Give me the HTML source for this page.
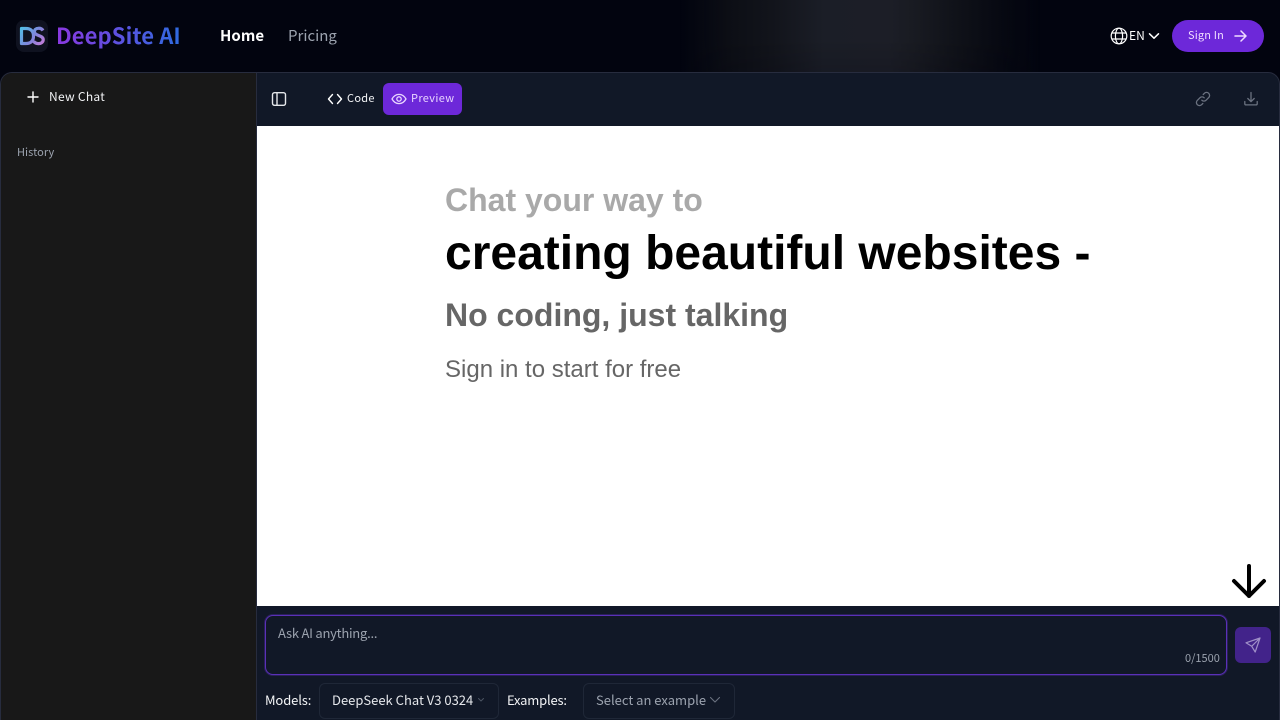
<!DOCTYPE html>
<html><head><meta charset="utf-8"><style>
*{box-sizing:border-box;margin:0;padding:0}
html,body{width:1280px;height:720px;overflow:hidden;background:#02040f;font-family:"Noto Sans CJK SC","Liberation Sans",sans-serif;color:#fff}
.a{position:absolute;white-space:nowrap}
#glow{left:640px;top:0;width:400px;height:72px;background:linear-gradient(90deg,rgba(2,4,15,0) 0%,rgba(2,4,15,0) 10%,#0c0e15 22%,#12141b 33%,#1b1e27 46%,#1c1e27 62%,#191b22 68%,#0f1118 80%,#070912 90%,rgba(2,4,15,0) 100%);-webkit-mask-image:linear-gradient(180deg,#000 0%,#000 55%,rgba(0,0,0,.85) 100%);mask-image:linear-gradient(180deg,#000 0%,#000 55%,rgba(0,0,0,.85) 100%)}
#frame{left:0;top:72px;width:1280px;height:648px;border:1px solid #272c3e;border-bottom:0;border-radius:12px 12px 0 0;overflow:hidden;background:#111827}
svg{position:absolute;fill:none;stroke-linecap:round;stroke-linejoin:round}
h1,h2,h3,p{position:absolute;font-family:"Liberation Sans",Arial,sans-serif;white-space:nowrap}
</style></head><body>
<div class="a" id="glow"></div>

<div class="a" style="left:16px;top:20px;width:32px;height:32px;border-radius:8px;background:#0f1220"></div>
<svg style="left:16px;top:20px" width="32" height="32" viewBox="0 0 32 32"><defs><linearGradient id="lg" gradientUnits="userSpaceOnUse" x1="4" y1="7" x2="27" y2="26"><stop offset="0" stop-color="#4fc3e8"/><stop offset=".55" stop-color="#7f86dc"/><stop offset="1" stop-color="#c87ad8"/></linearGradient></defs>
<path d="M5.500 8.500h4.500c5 0 7.500 2.800 7.500 7.500s-2.500 7.500-7.500 7.500H5.500z" stroke="url(#lg)" stroke-width="3.200" stroke-linecap="butt"/>
<path d="M27 10.500c-1-1.600-2.800-2.300-4.600-2.200-2.500.1-4 1.500-4 3.400 0 4.500 8.800 3 8.800 7.900 0 2.400-2 4-4.800 4-2 0-3.800-.9-4.800-2.400" stroke="url(#lg)" stroke-width="3.200" stroke-linecap="butt"/></svg>
<div class="a" style="left:56px;top:19px;font-size:22px;line-height:32px;font-weight:700;background:linear-gradient(90deg,#8a38e0,#2f6be0);-webkit-background-clip:text;background-clip:text;color:transparent;letter-spacing:.08px">DeepSite AI</div>
<div class="a" style="left:220px;top:25px;font-size:15px;line-height:22px;font-weight:700;letter-spacing:.05px">Home</div>
<div class="a" style="left:288px;top:25px;font-size:15px;line-height:22px;color:#9ca3af;letter-spacing:0">Pricing</div>

<svg style="left:1110px;top:27px" width="18" height="18" viewBox="0 0 18 18" stroke="#fff" stroke-width="1.200"><circle cx="9" cy="9" r="7.800"/><ellipse cx="9" cy="9" rx="3.600" ry="7.800"/><path d="M2 6h14M2 12h14"/></svg>
<div class="a" style="left:1129px;top:27px;font-size:12px;line-height:18px">EN</div>
<svg style="left:1147px;top:31px" width="14" height="10" viewBox="0 0 14 10" stroke="#fff" stroke-width="1.500"><path d="M2.500 2.800L7 7.200l4.500-4.400"/></svg>
<div class="a" style="left:1172px;top:20px;width:92px;height:32px;border-radius:16px;background:#6d28d9"></div>
<div class="a" style="left:1188px;top:26px;font-size:11px;line-height:18px;color:#f0dcff;letter-spacing:.15px">Sign In</div>
<svg style="left:1233px;top:29px" width="14" height="14" viewBox="0 0 14 14" stroke="#f0dcff" stroke-width="1.500"><path d="M2 7h10.500M8 2l5 5-5 5"/></svg>

<div class="a" id="frame">
 <div class="a" style="left:0;top:0;width:256px;height:648px;background:#181818;border-right:1px solid #272c3e"></div>
 <svg style="left:25px;top:17px" width="14" height="14" viewBox="0 0 14 14" stroke="#fff" stroke-width="1.400"><path d="M7 2v10M2 7h10"/></svg>
 <div class="a" style="left:48px;top:15px;font-size:12px;line-height:18px;letter-spacing:.3px;color:#f3f4f6">New Chat</div>
 <div class="a" style="left:16px;top:70px;font-size:11px;line-height:18px;color:#9ca3af;letter-spacing:.05px">History</div>

 <svg style="left:270px;top:18px" width="16" height="16" viewBox="0 0 16 16" stroke="#e5e7eb" stroke-width="1.400"><rect x="1.500" y="1.700" width="13" height="12.600" rx="2"/><path d="M6 2v12"/></svg>
 <svg style="left:326px;top:20px" width="16" height="12" viewBox="0 0 16 12" stroke="#fff" stroke-width="1.400"><path d="M5.500 1.500L1.500 6l4 4.500M10.500 1.500l4 4.500-4 4.500"/></svg>
 <div class="a" style="left:346px;top:16px;font-size:11px;line-height:18px;letter-spacing:.3px;color:#f3f4f6">Code</div>
 <div class="a" style="left:382px;top:10px;width:79px;height:32px;border-radius:6px;background:#6d28d9"></div>
 <svg style="left:390px;top:19px" width="16" height="14" viewBox="0 0 16 14" stroke="#e9d5ff" stroke-width="1.300"><path d="M1 7c1.700-3 4-4.600 7-4.600S13.300 4 15 7c-1.700 3-4 4.600-7 4.600S2.700 10 1 7z"/><circle cx="8" cy="7" r="2.200"/></svg>
 <div class="a" style="left:410px;top:16px;font-size:11px;line-height:18px;letter-spacing:.35px;color:#e9d5ff">Preview</div>
 <svg style="left:1194px;top:18px" width="16" height="16" viewBox="0 0 16 16" stroke="#6b7280" stroke-width="1.300"><path d="M6.800 9.200a3 3 0 004.300 0l2.600-2.600a3 3 0 00-4.300-4.300L8.200 3.500"/><path d="M9.200 6.800a3 3 0 00-4.300 0L2.300 9.400a3 3 0 004.300 4.300l1.200-1.200"/></svg>
 <svg style="left:1242px;top:18px" width="16" height="16" viewBox="0 0 16 16" stroke="#6b7280" stroke-width="1.300"><path d="M8 1.500v9M4.800 7.500L8 10.700l3.200-3.200M1.800 10.500v2.200c0 .7.500 1.200 1.200 1.200h10c.7 0 1.200-.5 1.200-1.200v-2.200"/></svg>

 <div class="a" style="left:256px;top:53px;width:1022px;height:480px;background:#fff;overflow:hidden">
  <h3 style="left:188px;top:56px;font-size:32px;line-height:37px;font-weight:700;color:#a9a9a9">Chat your way to</h3>
  <h1 style="left:188px;top:100px;font-size:48px;line-height:56px;font-weight:700;color:#000">creating beautiful websites -</h1>
  <h2 style="left:188px;top:171px;font-size:32px;line-height:37px;font-weight:700;color:#666">No coding, just talking</h2>
  <p style="left:188px;top:230px;font-size:24px;line-height:28px;color:#666">Sign in to start for free</p>
  <svg style="left:974px;top:437px" width="36" height="36" viewBox="0 0 36 36" stroke="#000" stroke-width="4"><path d="M18 3v30M3 18l15 15 15-15"/></svg>
 </div>

 <div class="a" style="left:264px;top:542px;width:962px;height:60px;border:1px solid #5a30b8;box-shadow:0 0 0 1px rgba(90,48,184,.35);border-radius:8px;background:#111827"></div>
 <div class="a" style="left:277px;top:550px;font-size:13px;line-height:20px;color:#9ca3af;letter-spacing:-.24px">Ask AI anything...</div>
 <div class="a" style="left:1184px;top:577px;font-size:11px;line-height:16px;color:#9ca3af">0/1500</div>
 <div class="a" style="left:1234px;top:554px;width:36px;height:36px;border-radius:6px;background:#42238a"></div>
 <svg style="left:1244px;top:564px" width="16" height="16" viewBox="0 0 16 16" stroke="#a090c8" stroke-width="1.200"><path d="M15 1L1 5.800l5.700 3.500L10.200 15zM15 1L6.700 9.300"/></svg>

 <div class="a" style="left:264px;top:617px;font-size:13px;line-height:20px;color:#f3f4f6;letter-spacing:-.12px">Models:</div>
 <div class="a" style="left:318px;top:610px;width:180px;height:36px;border:1px solid #1f2737;border-radius:6px"></div>
 <div class="a" style="left:331px;top:617px;font-size:13px;line-height:20px;color:#e5e7eb">DeepSeek Chat V3 0324</div>
 <svg style="left:475px;top:623px" width="10" height="8" viewBox="0 0 10 8" stroke="#4b5563" stroke-width="1"><path d="M2.500 2.500L5 5l2.500-2.500"/></svg>
 <div class="a" style="left:506px;top:617px;font-size:13px;line-height:20px;color:#f3f4f6;letter-spacing:-.2px">Examples:</div>
 <div class="a" style="left:582px;top:610px;width:152px;height:36px;border:1px solid #1f2737;border-radius:6px"></div>
 <div class="a" style="left:595px;top:617px;font-size:13px;line-height:20px;color:#9ca3af">Select an example</div>
 <svg style="left:707px;top:622px" width="14" height="10" viewBox="0 0 14 10" stroke="#6b7280" stroke-width="1.100"><path d="M2.500 2.500L7 7l4.500-4.500"/></svg>
</div>
</body></html>
